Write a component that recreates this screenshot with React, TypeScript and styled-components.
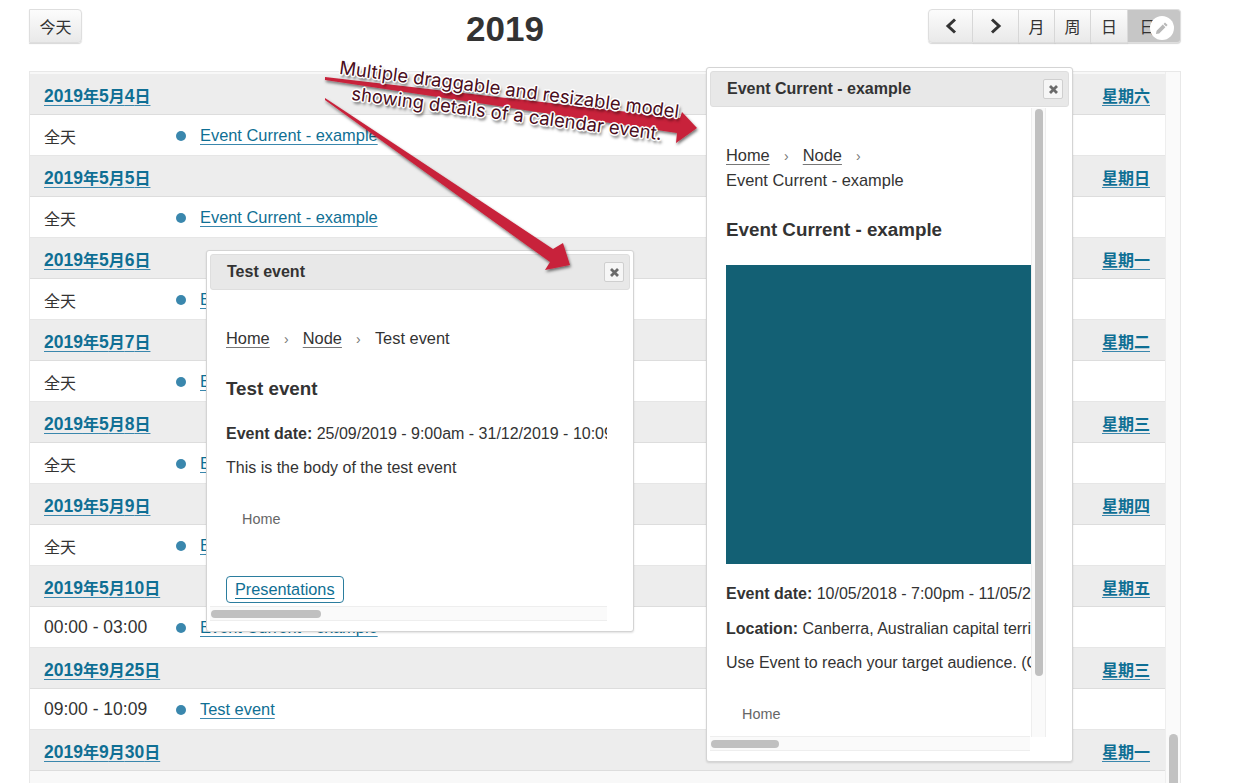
import React from "react";
import styled, { createGlobalStyle } from "styled-components";

const Global = createGlobalStyle`
  html, body { margin: 0; padding: 0; background: #fff; }
  body { font-family: "Liberation Sans", "Noto Sans CJK SC", sans-serif; color: #333; overflow: hidden; }
`;

const Page = styled.div`
  position: relative;
  width: 1237px;
  height: 783px;
  overflow: hidden;
`;

const Toolbar = styled.div`
  display: flex;
  justify-content: space-between;
  align-items: flex-start;
  height: 71px;
  padding: 9px 56px 0 29px;
  box-sizing: border-box;
`;

const Title = styled.h2`
  margin: 0;
  font-size: 35px;
  line-height: 40px;
  font-weight: 700;
  color: #333;
`;

const Btn = styled.button<{ $active?: boolean; $w?: number }>`
  width: ${(p) => p.$w ?? 36}px;
  height: 34px;
  padding: 0;
  font: 16px "Liberation Sans", "Noto Sans CJK SC", sans-serif;
  color: #333;
  border: 1px solid #dedede;
  border-left-width: 0;
  background: ${(p) => (p.$active ? "#c6c6c6" : "linear-gradient(#fcfcfc, #e9e9e9)")};
  box-shadow: 0 1px 1px rgba(0, 0, 0, 0.16);
  display: flex;
  align-items: center;
  justify-content: center;
  &:first-child { border-left-width: 1px; border-radius: 4px 0 0 4px; }
  &:last-of-type { border-radius: 0 4px 4px 0; }
`;

const TodayBtn = styled(Btn)`
  border-left-width: 1px;
  border-radius: 4px;
  width: 53px;
`;

const BtnGroup = styled.div`
  display: flex;
  position: relative;
`;

const ActiveLabel = styled.span`
  margin-right: 13px;
`;

const EditBadge = styled.span`
  position: absolute;
  right: 7px;
  top: 7px;
  width: 24px;
  height: 24px;
  border-radius: 50%;
  background: #fff;
  display: flex;
  align-items: center;
  justify-content: center;
`;

const Calendar = styled.div`
  margin: 0 56px 0 29px;
  border: 1px solid #e8e8e8;
  border-bottom: 0;
  padding: 2px 15px 0 0;
  position: relative;
  background: #f8f8f8;
  height: 712px;
  box-sizing: border-box;
  overflow: hidden;
`;

const TrackThumb = styled.div`
  position: absolute;
  right: 2px;
  top: 662px;
  width: 9px;
  height: 60px;
  border-radius: 5px;
  background: #c2c2c2;
`;

const Track = styled.div`
  position: absolute;
  right: 0;
  top: 0;
  bottom: 0;
  width: 14px;
  background: #fafafa;
  border-left: 1px solid #eee;
`;

const DayHead = styled.div`
  height: 41px;
  box-sizing: border-box;
  background: #ededed;
  border-bottom: 1px solid #ddd;
  display: flex;
  justify-content: space-between;
  align-items: center;
  padding: 1px 15px 0 14px;
`;

const DayLink = styled.a`
  font-size: 16px;
  font-weight: 700;
  color: #0f6f94;
  text-decoration: underline;
  text-decoration-color: #3a87ad;
  text-underline-offset: 3px;
`;

const Num = styled.span`
  font-size: 17.5px;
`;

const EventRow = styled.div`
  height: 41px;
  box-sizing: border-box;
  background: #fff;
  border-bottom: 1px solid #e6e6e6;
  display: flex;
  align-items: center;
  padding: 1px 0 0 14px;
  font-size: 16.4px;
  color: #333;
`;

const Time = styled.span<{ $num: boolean }>`
  width: 132px;
  font-size: ${(p) => (p.$num ? 17.5 : 16)}px;
`;

const Dot = styled.i`
  width: 10px;
  height: 10px;
  border-radius: 50%;
  background: #3a87ad;
  margin-right: 14px;
`;

const EventLink = styled.a`
  color: #0f6f94;
  text-decoration: underline;
  text-decoration-color: #3a87ad;
  text-underline-offset: 3px;
  white-space: nowrap;
`;

const Dialog = styled.div<{ $x: number; $y: number; $w: number; $h: number }>`
  position: absolute;
  left: ${(p) => p.$x}px;
  top: ${(p) => p.$y}px;
  width: ${(p) => p.$w}px;
  height: ${(p) => p.$h}px;
  box-sizing: border-box;
  background: #fff;
  border: 1px solid #d4d4d4;
  border-radius: 3px;
  box-shadow: 0 1px 2px rgba(0, 0, 0, 0.12);
  padding: 3px;
  overflow: hidden;
`;

const DialogBar = styled.div`
  background: #e8e8e8;
  border: 1px solid #dedede;
  box-sizing: content-box;
  height: 34px;
  border-radius: 3px;
  display: flex;
  align-items: center;
  justify-content: space-between;
  padding: 0 5px 0 16px;
  font-size: 16px;
  font-weight: 700;
  color: #333;
`;

const Close = styled.span`
  width: 20px;
  height: 20px;
  box-sizing: border-box;
  border: 1px solid #cfcfcf;
  border-radius: 2px;
  background: #f6f6f6;
  display: flex;
  align-items: center;
  justify-content: center;
`;

const DialogBody = styled.div<{ $w: number; $h: number }>`
  position: relative;
  width: ${(p) => p.$w}px;
  height: ${(p) => p.$h}px;
  padding: 36px 0 0 16px;
  box-sizing: border-box;
  overflow: hidden;
  font-size: 16px;
  color: #333;
`;

const Crumbs = styled.div`
  line-height: 24px;
  font-size: 16.4px;
  a { color: #333; text-decoration: underline; text-decoration-color: #777; text-underline-offset: 3px; }
  b { display: inline-block; font-weight: 400; color: #777; width: 33px; text-align: center; font-size: 14px; }
`;

const Heading = styled.h3`
  margin: 0;
  font-size: 18.8px;
  line-height: 24px;
  font-weight: 700;
`;

const Para = styled.p`
  margin: 0;
  line-height: 20px;
  white-space: nowrap;
`;

const MenuItem = styled.div`
  font-size: 14.4px;
  line-height: 18px;
  color: #666;
  padding-left: 16px;
`;

const Pill = styled.a`
  display: inline-block;
  border: 1px solid #2b7d9e;
  border-radius: 4px;
  padding: 0 8px;
  line-height: 25px;
  font-size: 16.3px;
  color: #0f6f94;
  text-decoration: underline;
  text-underline-offset: 3px;
`;

const HScroll = styled.div<{ $w: number; $thumb: number; $y: number }>`
  position: absolute;
  left: 3px;
  top: ${(p) => p.$y}px;
  width: ${(p) => p.$w}px;
  height: 15px;
  box-sizing: border-box;
  background: #fafafa;
  border-top: 1px solid #eee;
  border-bottom: 1px solid #eee;
  &::after {
    content: "";
    position: absolute;
    left: 1px;
    top: 3px;
    width: ${(p) => p.$thumb}px;
    height: 8px;
    border-radius: 4px;
    background: #c0c0c0;
  }
`;

const VScroll = styled.div`
  position: absolute;
  left: 324px;
  top: 40px;
  width: 15px;
  height: 629px;
  box-sizing: border-box;
  background: #fafafa;
  border-left: 1px solid #eee;
  border-right: 1px solid #eee;
  &::after {
    content: "";
    position: absolute;
    left: 3px;
    top: 1px;
    width: 8px;
    height: 567px;
    border-radius: 4px;
    background: #c0c0c0;
  }
`;

const Teal = styled.div`
  width: 305px;
  height: 299px;
  background: #136074;
`;

const Spacer = styled.div<{ $h: number }>`
  height: ${(p) => p.$h}px;
`;

const Note = styled.div<{ $x: number; $y: number; $r: number }>`
  position: absolute;
  left: ${(p) => p.$x}px;
  top: ${(p) => p.$y}px;
  font-family: "Inter", "Liberation Sans", sans-serif;
  font-size: 18.4px;
  line-height: 20px;
  white-space: nowrap;
  color: #4a0d1c;
  transform: rotate(${(p) => p.$r}deg);
  transform-origin: left top;
  text-shadow: 1px 1px 0 #fff, -1px 1px 0 #fff, 1px -1px 0 #fff, -1px -1px 0 #fff, 0 1.5px 0 #fff, 1.5px 0 0 #fff,
    0 -1.5px 0 #fff, -1.5px 0 0 #fff, 2px 3px 3px rgba(0, 0, 0, 0.75);
`;

const Arrows = styled.svg`
  position: absolute;
  left: 0;
  top: 0;
  pointer-events: none;
`;

const days: [string, string, string, string][] = [
  ["2019年5月4日", "星期六", "全天", "Event Current - example"],
  ["2019年5月5日", "星期日", "全天", "Event Current - example"],
  ["2019年5月6日", "星期一", "全天", "Event Current - example"],
  ["2019年5月7日", "星期二", "全天", "Event Current - example"],
  ["2019年5月8日", "星期三", "全天", "Event Current - example"],
  ["2019年5月9日", "星期四", "全天", "Event Current - example"],
  ["2019年5月10日", "星期五", "00:00 - 03:00", "Event Current - example"],
  ["2019年9月25日", "星期三", "09:00 - 10:09", "Test event"],
  ["2019年9月30日", "星期一", "", ""],
];

const DateText = ({ text }: { text: string }) => (
  <>
    {text.split(/(\d+)/).map((part, i) => (i % 2 ? <Num key={i}>{part}</Num> : part))}
  </>
);

const X = () => (
  <svg width="11" height="11" viewBox="0 0 11 11">
    <path d="M2 2l7 7M9 2l-7 7" stroke="#6a6a6a" strokeWidth="2.8" />
  </svg>
);

export default function App() {
  return (
    <Page>
      <Global />
      <Toolbar>
        <TodayBtn>今天</TodayBtn>
        <Title>2019</Title>
        <BtnGroup>
          <Btn $w={45}>
            <svg width="14" height="16" viewBox="0 0 14 16"><path d="M11 1.5L4 8l7 6.5" fill="none" stroke="#333" strokeWidth="3" /></svg>
          </Btn>
          <Btn $w={46}>
            <svg width="14" height="16" viewBox="0 0 14 16"><path d="M3 1.5L10 8l-7 6.5" fill="none" stroke="#333" strokeWidth="3" /></svg>
          </Btn>
          <Btn>月</Btn>
          <Btn>周</Btn>
          <Btn $w={37}>日</Btn>
          <Btn $active $w={53}><ActiveLabel>日</ActiveLabel></Btn>
          <EditBadge>
            <svg width="14" height="14" viewBox="0 0 14 14">
              <path d="M10 1.4l2.6 2.6-1.5 1.5-2.6-2.6zM7.8 3.6l2.6 2.6-6.2 6.2-3.3.7.7-3.3z" fill="#b8b8b8" />
            </svg>
          </EditBadge>
        </BtnGroup>
      </Toolbar>

      <Calendar>
        {days.map(([d, w, t, e]) => (
          <React.Fragment key={d}>
            <DayHead>
              <DayLink><DateText text={d} /></DayLink>
              <DayLink>{w}</DayLink>
            </DayHead>
            {e && (
              <EventRow>
                <Time $num={/\d/.test(t)}>{t}</Time><Dot /><EventLink>{e}</EventLink>
              </EventRow>
            )}
          </React.Fragment>
        ))}
        <Track><TrackThumb /></Track>
      </Calendar>

      <Dialog $x={206} $y={250} $w={428} $h={382}>
        <DialogBar>Test event<Close><X /></Close></DialogBar>
        <DialogBody $w={397} $h={315}>
          <Crumbs><a>Home</a><b>›</b><a>Node</a><b>›</b>Test event</Crumbs>
          <Spacer $h={26} />
          <Heading>Test event</Heading>
          <Spacer $h={23} />
          <Para><strong>Event date:</strong> 25/09/2019 - 9:00am - 31/12/2019 - 10:09am</Para>
          <Spacer $h={14} />
          <Para>This is the body of the test event</Para>
          <Spacer $h={32} />
          <MenuItem>Home</MenuItem>
          <Spacer $h={48} />
          <Pill>Presentations</Pill>
        </DialogBody>
        <HScroll $w={397} $thumb={110} $y={355} />
      </Dialog>

      <Dialog $x={706} $y={67} $w={367} $h={695}>
        <DialogBar>Event Current - example<Close><X /></Close></DialogBar>
        <DialogBody $w={324} $h={629}>
          <Crumbs><a>Home</a><b>›</b><a>Node</a><b>›</b><br />Event Current - example</Crumbs>
          <Spacer $h={26} />
          <Heading>Event Current - example</Heading>
          <Spacer $h={23} />
          <Teal />
          <Spacer $h={20} />
          <Para><strong>Event date:</strong> 10/05/2018 - 7:00pm - 11/05/2018 - 3:00am</Para>
          <Spacer $h={15} />
          <Para><strong>Location:</strong> Canberra, Australian capital territory</Para>
          <Spacer $h={14} />
          <Para>Use Event to reach your target audience. (Optional)</Para>
          <Spacer $h={32} />
          <MenuItem>Home</MenuItem>
        </DialogBody>
        <VScroll />
        <HScroll $w={320} $thumb={68} $y={668} />
      </Dialog>

      <Arrows width="1237" height="783" viewBox="0 0 1237 783">
        <defs>
          <filter id="sh" x="-10%" y="-10%" width="120%" height="120%">
            <feDropShadow dx="1" dy="2" stdDeviation="1.5" floodColor="#000" floodOpacity="0.55" />
          </filter>
        </defs>
        <g fill="#c8223a" filter="url(#sh)">
          <polygon points="325,77 680,118 682,112 697,128 676,143 677,133 325,80" />
          <polygon points="325,98 553,249 563,243 570,265 545,270 550,262 325,100" />
        </g>
      </Arrows>
      <Note $x={341} $y={57} $r={7.4}>Multiple draggable and resizable model</Note>
      <Note $x={353} $y={83} $r={7.4}>showing details of a calendar event.</Note>
    </Page>
  );
}
